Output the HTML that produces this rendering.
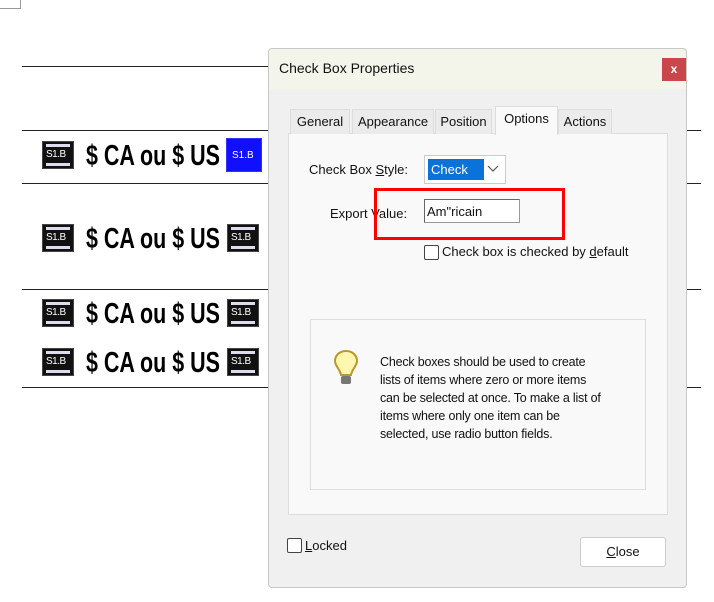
<!DOCTYPE html><html><head><style>
body{margin:0;width:714px;height:602px;background:#fff;position:relative;overflow:hidden;font-family:"Liberation Sans",sans-serif}
.a{position:absolute}
.hl{position:absolute;height:1px;background:#222}
.ic{position:absolute;width:30px;height:26px;background:#111;border:1px solid #444}
.ic:before,.ic:after{content:"";position:absolute;left:3px;right:3px;height:3px;background:#dde}
.ic:before{top:2px}.ic:after{bottom:2px}
.ic span{position:absolute;left:3px;top:8px;color:#fff;font-size:10px;line-height:10px;letter-spacing:-.5px}
.t{position:absolute;font-size:29px;font-weight:bold;color:#000;transform:scaleX(.74);transform-origin:left;white-space:nowrap;line-height:30px}
.dlg{position:absolute;left:268px;top:48px;width:417px;height:538px;background:#f0f0f0;border:1px solid #c8c8c8;border-radius:4px;font-size:13px;color:#111}
.tab{position:absolute;top:60px;height:24px;background:#ebebeb;border:1px solid #ddd;border-bottom:none;line-height:24px;text-align:center;font-size:13px}
.cb{position:absolute;width:13px;height:13px;border:1px solid #444;border-radius:2px;background:#fff}
</style></head><body>
<div class="a" style="left:0;top:0;width:20px;height:8px;border:1px solid #999;border-top:none;border-left:none"></div>
<div class="hl" style="left:22px;top:66px;width:246px"></div>
<div class="hl" style="left:22px;top:130px;width:246px"></div>
<div class="hl" style="left:22px;top:183px;width:246px"></div>
<div class="hl" style="left:22px;top:289px;width:246px"></div>
<div class="hl" style="left:22px;top:387px;width:246px"></div>
<div class="hl" style="left:686px;top:130px;width:15px"></div>
<div class="hl" style="left:686px;top:183px;width:15px"></div>
<div class="hl" style="left:686px;top:289px;width:15px"></div>
<div class="hl" style="left:686px;top:387px;width:15px"></div>

<div class="ic" style="left:42px;top:141px"><span>S1.B</span></div><div class="t" style="left:86px;top:141px">$ CA ou $ US</div>
<div class="a" style="left:226px;top:138px;width:34px;height:32px;background:#1010ff;border:1px solid #33f"><span style="position:absolute;left:5px;top:11px;color:#fff;font-size:10px">S1.B</span></div>
<div class="ic" style="left:42px;top:224px"><span>S1.B</span></div><div class="t" style="left:86px;top:224px">$ CA ou $ US</div><div class="ic" style="left:227px;top:224px"><span>S1.B</span></div>
<div class="ic" style="left:42px;top:299px"><span>S1.B</span></div><div class="t" style="left:86px;top:299px">$ CA ou $ US</div><div class="ic" style="left:227px;top:299px"><span>S1.B</span></div>
<div class="ic" style="left:42px;top:348px"><span>S1.B</span></div><div class="t" style="left:86px;top:348px">$ CA ou $ US</div><div class="ic" style="left:227px;top:348px"><span>S1.B</span></div>

<div class="dlg">
<div class="a" style="left:0;top:0;width:417px;height:40px;background:#f4f5ea;border-radius:4px 4px 0 0"></div>
<div class="a" style="left:10px;top:11px;font-size:14px">Check Box Properties</div>
<div class="a" style="left:393px;top:9px;width:24px;height:23px;background:#c9474a;color:#fff;text-align:center;line-height:22px;font-size:12px;font-weight:bold">x</div>
<div class="a" style="left:19px;top:84px;width:378px;height:380px;background:#f9f9f9;border:1px solid #ddd"></div>
<div class="tab" style="left:21px;width:58px">General</div>
<div class="tab" style="left:83px;width:80px">Appearance</div>
<div class="tab" style="left:166px;width:55px">Position</div>
<div class="tab" style="left:226px;top:57px;height:28px;width:61px;background:#f9f9f9;line-height:24px">Options</div>
<div class="tab" style="left:289px;width:52px">Actions</div>
<div class="a" style="left:40px;top:113px">Check Box <u>S</u>tyle:</div>
<div class="a" style="left:155px;top:106px;width:80px;height:27px;background:#fff;border:1px solid #ccc"><div class="a" style="left:3px;top:3px;width:53px;height:21px;background:#0a72d8;color:#fff;line-height:21px;padding-left:3px">Check</div><svg class="a" style="left:62px;top:9px" width="12" height="8"><path d="M1 1l5 5 5-5" fill="none" stroke="#555" stroke-width="1.2"/></svg></div>
<div class="a" style="left:61px;top:157px">Export Value:</div>
<div class="a" style="left:155px;top:150px;width:96px;height:24px;background:#fff;border:1px solid #999;border-top-color:#666;border-left-color:#666;line-height:23px;padding-left:2px;box-sizing:border-box">Am"ricain</div>
<div class="a" style="left:105px;top:139px;width:191px;height:52px;border:3px solid #f00;box-sizing:border-box"></div>
<div class="cb" style="left:155px;top:196px"></div>
<div class="a" style="left:173px;top:195px">Check box is checked by <u>d</u>efault</div>
<div class="a" style="left:41px;top:270px;width:334px;height:169px;background:#f9f9f9;border:1px solid #ddd"></div>
<svg class="a" style="left:64px;top:300px" width="28" height="42"><path d="M13 2C6 2 2 7 2 12c0 5 5 8 6 14h10c1-6 6-9 6-14C24 7 20 2 13 2z" fill="#fff7b0" stroke="#b59a2a" stroke-width="2"/><rect x="8" y="27" width="10" height="8" rx="2" fill="#777"/></svg>
<div class="a" style="left:111px;top:304px;width:222px;line-height:18px;font-size:12.5px;letter-spacing:-.2px">Check boxes should be used to create lists of items where zero or more items can be selected at once. To make a list of items where only one item can be selected, use radio button fields.</div>
<div class="cb" style="left:18px;top:489px"></div>
<div class="a" style="left:36px;top:489px"><u>L</u>ocked</div>
<div class="a" style="left:311px;top:488px;width:84px;height:28px;background:#fff;border:1px solid #ccc;border-radius:3px;text-align:center;line-height:28px"><u>C</u>lose</div>
</div>
</body></html>
